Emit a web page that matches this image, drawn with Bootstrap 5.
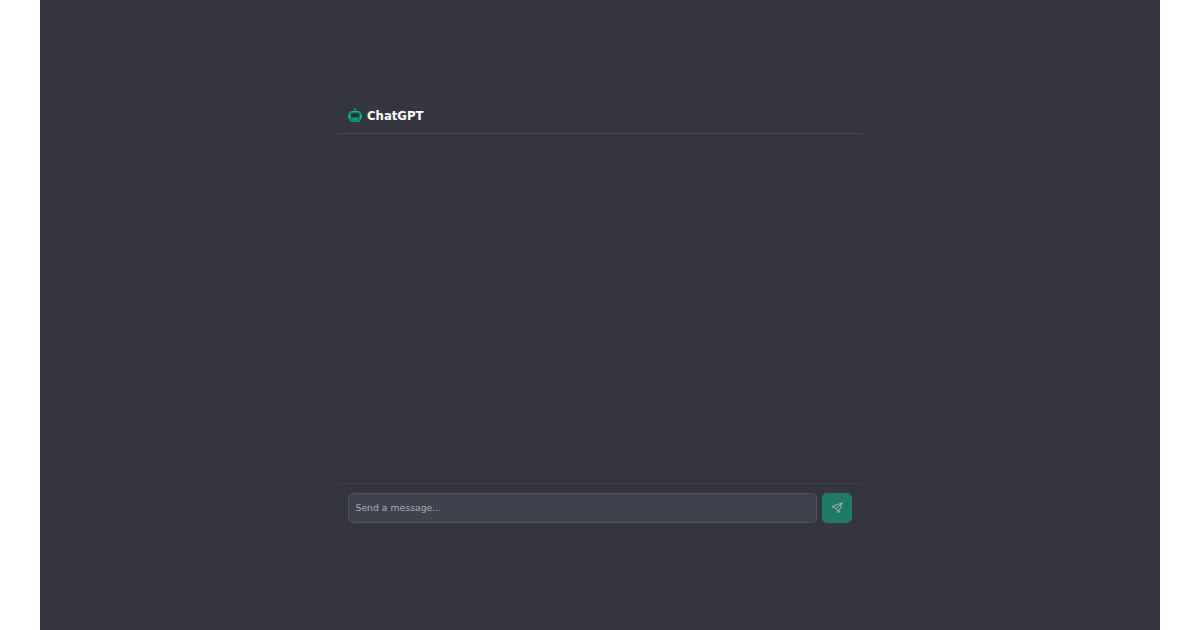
<!DOCTYPE html>
<html lang="en">
<head>
<meta charset="utf-8">
<title>ChatGPT</title>
<link href="https://cdn.jsdelivr.net/npm/bootstrap@5.3.0/dist/css/bootstrap.min.css" rel="stylesheet">
<style>
html,body{height:100%;background:#fff;font-family:"DejaVu Sans",sans-serif;}
.app-shell{width:1120px;height:630px;background:#343541;}
.chat-box{width:524px;height:438px;}
.chat-head{height:38px;border-bottom:1px solid #4a4b57;padding:2px 10px 0;color:#fff;font-size:11.7px;font-weight:700;gap:5px;}
.chat-head svg{margin-bottom:2px;}
.title-text{padding-top:2px;}
.chat-foot{border-top:1px solid #40414f;padding:9px 10px 11px;gap:5px;}
.msg-input{height:30px;min-height:30px;padding:0 7px 2px 6.5px;font-size:9.3px;background:#40414f;border:1px solid #50515f;border-radius:5px;color:#fff;}
.msg-input::placeholder{color:#aeafb8;opacity:1;}
.msg-input:focus{background:#40414f;color:#fff;border-color:#50515f;box-shadow:none;}
.send-btn{width:30px;height:30px;padding:0 1px 0 0;background:#1f7a67;border:0;border-radius:5px;color:#a3b8b1;flex:none;}
</style>
</head>
<body>
<div class="app-shell mx-auto d-flex align-items-center justify-content-center">
  <div class="chat-box d-flex flex-column">
    <div class="chat-head d-flex align-items-center">
      <svg width="14" height="14" viewBox="0 0 14 14" aria-hidden="true">
        <circle cx="7" cy="1" r="0.8" fill="#14b583"/>
        <rect x="6.5" y="1" width="1" height="2.5" fill="#14b583"/>
        <rect x="1.5" y="3.5" width="11" height="9.8" rx="2.4" fill="#0d7d62" stroke="#14b583"/>
        <rect x="0" y="6.5" width="1.2" height="3.6" rx="0.5" fill="#14b583"/>
        <rect x="12.8" y="6.5" width="1.2" height="3.6" rx="0.5" fill="#14b583"/>
        <rect x="3.2" y="5.6" width="7.6" height="3.4" rx="0.9" fill="#2a2b35"/>
        <rect x="4.5" y="10.6" width="5" height="1" fill="#14b583"/>
      </svg>
      <span class="title-text">ChatGPT</span>
    </div>
    <div class="flex-grow-1"></div>
    <div class="chat-foot d-flex">
      <input class="form-control msg-input flex-grow-1" type="text" placeholder="Send a message...">
      <button class="btn send-btn d-flex align-items-center justify-content-center" type="button" aria-label="Send">
        <svg width="12" height="12" viewBox="0 0 24 24" fill="none" stroke="currentColor" stroke-width="2" stroke-linecap="round" stroke-linejoin="round" aria-hidden="true"><line x1="22" y1="2" x2="11" y2="13"/><polygon points="22 2 15 22 11 13 2 9 22 2"/></svg>
      </button>
    </div>
  </div>
</div>
<script src="https://cdn.jsdelivr.net/npm/bootstrap@5.3.0/dist/js/bootstrap.bundle.min.js"></script>
</body>
</html>
